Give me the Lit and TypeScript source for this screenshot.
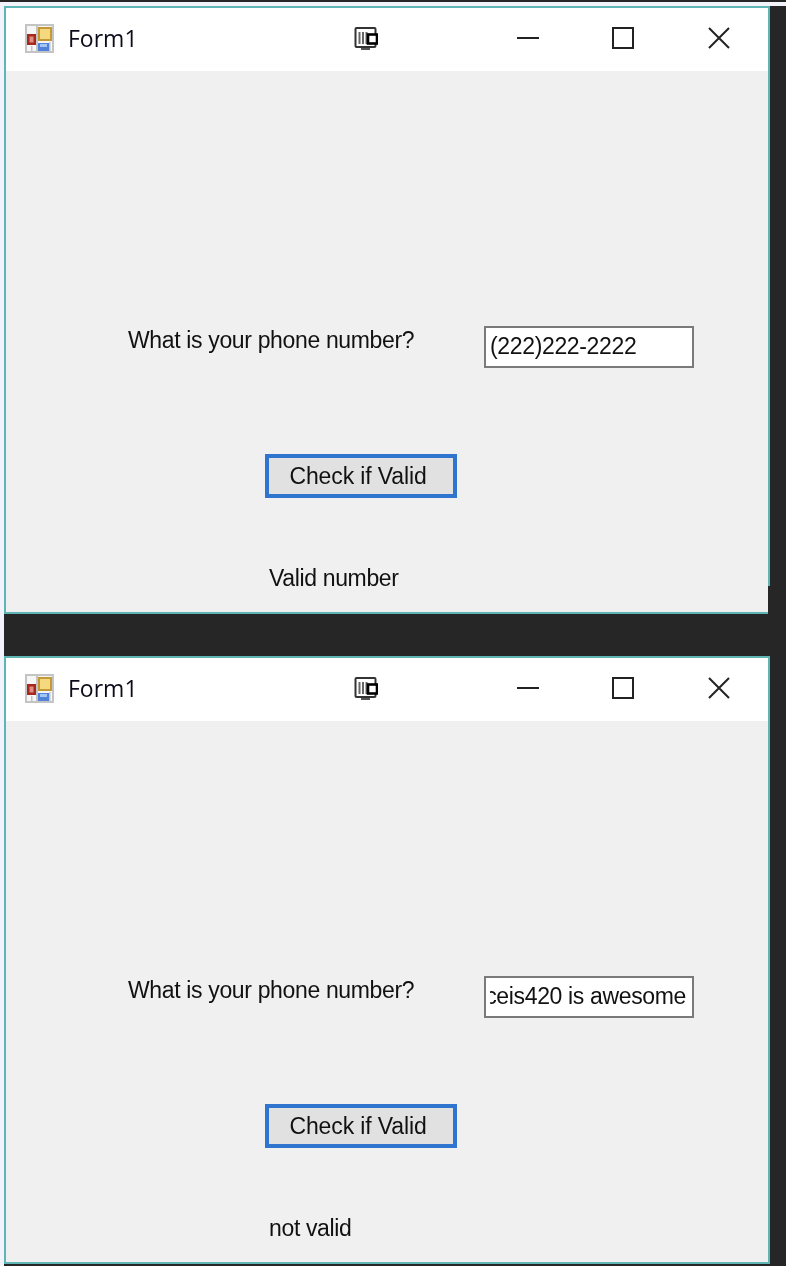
import { LitElement, html, css } from 'lit';
import { customElement, property } from 'lit/decorators.js';
import { classMap } from 'lit/directives/class-map.js';

@customElement('form-window')
class FormWindow extends LitElement {
  @property() value = '';
  @property() result = '';
  // textbox scrolled to its end, the first letters get clipped
  @property({ type: Boolean }) scrolled = false;

  static styles = css`
    :host {
      display: block;
    }
    .window {
      box-sizing: border-box;
      height: 608px;
      border: 2px solid #5fb5b5;
      background: #f0f0f0;
      display: flex;
      flex-direction: column;
      color: #111;
      font-family: 'Liberation Sans', Arial, sans-serif;
    }
    .titlebar {
      height: 63px;
      flex: none;
      background: #fff;
      display: flex;
      align-items: center;
      padding: 0 0 3px 19px;
      box-sizing: border-box;
    }
    .app-icon {
      width: 29px;
      height: 29px;
      flex: none;
      filter: blur(0.5px);
    }
    .title {
      margin-left: 14px;
      width: 286px;
      font-family: 'Open Sans', sans-serif;
      font-size: 23px;
      color: #0c0c1a;
      filter: blur(0.3px);
    }
    .snap {
      width: 24px;
      height: 24px;
      flex: none;
      filter: blur(0.4px);
    }
    .caption {
      width: 24px;
      height: 24px;
      flex: none;
      filter: blur(0.3px);
    }
    .min {
      margin-left: 138px;
    }
    .max {
      margin-left: 71px;
    }
    .close {
      margin-left: 72px;
    }
    .body {
      flex: 1;
      padding-top: 255px;
      font-size: 23px;
      letter-spacing: -0.35px;
      filter: blur(0.45px);
    }
    .row {
      display: flex;
      align-items: flex-start;
      padding-left: 122px;
    }
    .question {
      width: 356px;
      line-height: 28px;
    }
    .field {
      box-sizing: border-box;
      width: 210px;
      height: 42px;
      border: 2px solid #7a7a7a;
      background: #fff;
      padding: 0 6px 0 4px;
      line-height: 37px;
    }
    .clip {
      display: flex;
      overflow: hidden;
      white-space: nowrap;
    }
    .clip.scrolled {
      justify-content: flex-end;
    }
    .clip span {
      flex: none;
    }
    .check {
      display: block;
      box-sizing: border-box;
      width: 192px;
      height: 44px;
      margin: 86px 0 0 259px;
      border: 4px solid #2f74cf;
      background: #e1e1e1;
      color: inherit;
      font: inherit;
      letter-spacing: -0.13px;
      padding: 0 6px 0 0;
    }
    .result {
      margin: 66px 0 0 263px;
      line-height: 28px;
    }
  `;

  render() {
    return html`
      <div class="window">
        <div class="titlebar">
          <svg class="app-icon" viewBox="0 0 29 29">
            <rect width="29" height="29" fill="#c4c4c4" />
            <rect x="2" y="2" width="25" height="25" fill="#f6f6f6" />
            <rect x="2" y="10" width="9" height="11" fill="#a8281e" />
            <rect x="4.5" y="12.5" width="4" height="6" fill="#dc8f84" />
            <rect x="13" y="3" width="14" height="14" fill="#c39a36" />
            <rect x="15" y="5" width="10" height="10" fill="#f6d97e" />
            <rect x="13" y="19" width="11" height="8" fill="#4f82d8" />
            <rect x="15" y="20" width="7" height="3" fill="#a4c6f2" />
            <rect x="11" y="0" width="2" height="29" fill="#c4c4c4" />
            <rect x="6" y="22" width="1.5" height="7" fill="#c4c4c4" />
            <rect x="24" y="18" width="1.5" height="11" fill="#c4c4c4" />
          </svg>
          <span class="title">Form1</span>
          <svg class="snap" viewBox="0 0 24 24" fill="none" stroke="#333">
            <rect x="1.5" y="2" width="20" height="19" rx="1" stroke-width="2" />
            <path d="M5.5 6v12M9 6v12M12.5 6v12" stroke="#666" stroke-width="2" />
            <path d="M7 23h9" stroke="#555" stroke-width="2" />
            <rect x="14" y="8.5" width="9" height="9" fill="#fff" stroke="#000" stroke-width="2.6" />
          </svg>
          <svg class="caption min" viewBox="0 0 24 24">
            <path d="M1 12h22" stroke="#222" stroke-width="2" />
          </svg>
          <svg class="caption max" viewBox="0 0 24 24" fill="none">
            <rect x="2" y="2" width="20" height="20" stroke="#222" stroke-width="2" />
          </svg>
          <svg class="caption close" viewBox="0 0 24 24" fill="none">
            <path d="M2 2l20 20M22 2L2 22" stroke="#222" stroke-width="2" />
          </svg>
        </div>
        <div class="body">
          <div class="row">
            <span class="question">What is your phone number?</span>
            <div class="field">
              <div class=${classMap({ clip: true, scrolled: this.scrolled })}>
                <span>${this.value}</span>
              </div>
            </div>
          </div>
          <button class="check">Check if Valid</button>
          <div class="result">${this.result}</div>
        </div>
      </div>
    `;
  }
}

@customElement('app-root')
class AppRoot extends LitElement {
  static styles = css`
    :host {
      display: block;
      height: 1266px;
      background: #f3f3fb;
      overflow: hidden;
    }
    .top {
      height: 2px;
      background: #262626;
    }
    .stage {
      position: relative;
      margin: 4px 0 0 4px;
      padding: 0 16px 2px 0;
      background: #262626;
      display: flex;
      flex-direction: column;
      gap: 42px;
    }
    /* screenshot crop bites the right border of the first window */
    .notch {
      position: absolute;
      top: 580px;
      right: 16px;
      width: 2px;
      height: 28px;
      background: #262626;
    }
  `;

  render() {
    return html`
      <div class="top"></div>
      <div class="stage">
        <form-window value="(222)222-2222" result="Valid number"></form-window>
        <form-window value="ceis420 is awesome" result="not valid" scrolled></form-window>
        <div class="notch"></div>
      </div>
    `;
  }
}
